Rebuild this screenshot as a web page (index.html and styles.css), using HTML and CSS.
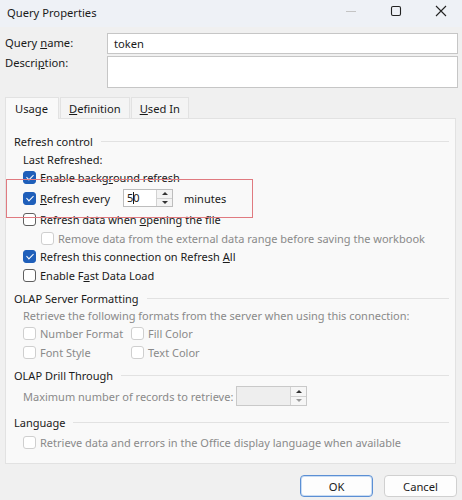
FILE: index.html
```html
<!DOCTYPE html>
<html>
<head>
<meta charset="utf-8">
<title>Query Properties</title>
<link rel="stylesheet" href="styles.css">
</head>
<body>
<div class="dialog">
  <div class="titlebar">
    <span class="title">Query Properties</span>
    <div class="caption-buttons">
      <span class="cap cap-min"><svg width="12" height="12" viewBox="0 0 12 12"><path d="M1 6.5h10" stroke="#c4c4c4" stroke-width="1"/></svg></span>
      <span class="cap cap-max"><svg width="12" height="12" viewBox="0 0 12 12"><rect x="1.5" y="1.5" width="9" height="9" rx="1.5" fill="none" stroke="#222" stroke-width="1.1"/></svg></span>
      <span class="cap cap-close"><svg width="12" height="12" viewBox="0 0 12 12"><path d="M1 1l10 10M11 1L1 11" stroke="#222" stroke-width="1.1"/></svg></span>
    </div>
  </div>

  <div class="content">
    <div class="field">
      <label class="field-label">Query <u>n</u>ame:</label>
      <div class="textbox name-box">token</div>
    </div>
    <div class="field">
      <label class="field-label desc-label">Descri<u>p</u>tion:</label>
      <div class="textbox desc-box"></div>
    </div>

    <div class="tabs">
      <div class="tab active">Usa<u>g</u>e</div>
      <div class="tab"><u>D</u>efinition</div>
      <div class="tab"><u>U</u>sed In</div>
    </div>

    <div class="panel">
      <div class="group-title">Refresh control</div>
      <div class="row plain">Last Refreshed:</div>
      <div class="row"><span class="check on"></span><span>Enable backg<u>r</u>ound refresh</span></div>
      <div class="row tall">
        <span class="check on"></span><span class="every-label"><u>R</u>efresh every</span>
        <div class="spin small-spin">
          <span class="spin-text">5<span class="caret"></span>0</span>
          <span class="spin-btns"><span class="arr up"></span><span class="arr down"></span></span>
        </div>
        <span class="unit">minutes</span>
      </div>
      <div class="row r19"><span class="check"></span><span>Refresh data when <u>o</u>pening the file</span></div>
      <div class="row sub dim"><span class="check off"></span><span>Remove data from the external data range before saving the workbook</span></div>
      <div class="row r19"><span class="check on"></span><span>Refresh this connection on Refresh <u>A</u>ll</span></div>
      <div class="row"><span class="check"></span><span>Enable F<u>a</u>st Data Load</span></div>

      <div class="group-title gap">OLAP Server Formatting</div>
      <div class="row plain dim r17">Retrieve the following formats from the server when using this connection:</div>
      <div class="row dim pair r19">
        <span class="cell"><span class="check off"></span><span>Number Format</span></span>
        <span class="cell"><span class="check off"></span><span>Fill Color</span></span>
      </div>
      <div class="row dim pair">
        <span class="cell"><span class="check off"></span><span>Font Style</span></span>
        <span class="cell"><span class="check off"></span><span>Text Color</span></span>
      </div>

      <div class="group-title gap">OLAP Drill Through</div>
      <div class="row plain dim tall">
        <span class="max-label">Maximum number of records to retrieve:</span>
        <div class="spin big-spin disabled">
          <span class="spin-text"></span>
          <span class="spin-btns"><span class="arr up"></span><span class="arr down"></span></span>
        </div>
      </div>

      <div class="group-title gap">Language</div>
      <div class="row dim lang"><span class="check off"></span><span>Retrieve data and errors in the Office display language when available</span></div>
    </div>

    <div class="buttons">
      <button class="btn default">OK</button>
      <button class="btn">Cancel</button>
    </div>
  </div>

  <div class="highlight"></div>
</div>
</body>
</html>
```

FILE: styles.css
```css
html, body {
  margin: 0;
  padding: 0;
}

body {
  width: 462px;
  height: 500px;
  overflow: hidden;
  background: #f0f0f0;
  font-family: "Noto Sans", "Open Sans", sans-serif;
  font-size: 11px;
  color: #1a1a1a;
}

.dialog {
  position: relative;
  width: 462px;
  height: 500px;
}

/* window caption */
.titlebar {
  height: 27px;
  background: #eef1f6;
  display: flex;
  align-items: center;
  justify-content: space-between;
  padding-left: 7px;
}

.title {
  font-size: 11.2px;
  color: #1a1a1a;
  margin-top: -3px;
}

.caption-buttons {
  display: flex;
  align-items: center;
  margin-top: -5px;
}

.cap {
  display: flex;
  width: 12px;
  height: 12px;
}

.cap-min { margin-right: 33px; }
.cap-max { margin-right: 33px; }
.cap-close { margin-right: 15px; }

/* dialog body */
.content {
  padding: 6px 4px 0 5px;
}

.field {
  display: flex;
  align-items: flex-start;
  margin-bottom: 2px;
}

.field-label {
  width: 102px;
  padding-top: 1px;
  line-height: 17px;
  font-size: 11.2px;
}

.field-label.desc-label {
  padding-top: 0;
  line-height: 14px;
}

.textbox {
  flex: 1;
  background: #fff;
  border: 1px solid #c6c6c6;
  box-sizing: border-box;
  padding: 1px 6px;
  line-height: 17px;
  font-size: 11.2px;
}

.name-box { height: 21px; }
.desc-box { height: 32px; }

/* tab strip */
.tabs {
  display: flex;
  margin-top: 9px;
  height: 22px;
  width: 447px;
}

.tab {
  height: 21px;
  line-height: 21px;
  padding: 0 8px;
  box-sizing: border-box;
  border: 1px solid #e2e2e2;
  border-bottom: none;
  background: #f4f4f4;
  margin-right: 1px;
  font-size: 11.2px;
}

.tab.active {
  background: #f9f9f9;
  height: 22px;
  position: relative;
  z-index: 1;
  padding: 0 10px 0 9px;
}

.panel {
  width: 451px;
  height: 346px;
  box-sizing: border-box;
  background: #f9f9f9;
  border: 1px solid #e2e2e2;
  margin-top: -1px;
  padding: 13px 6px 0 8px;
}

.group-title {
  display: flex;
  align-items: center;
  height: 18px;
  white-space: nowrap;
}

.group-title::after {
  content: "";
  flex: 1;
  height: 1px;
  background: #e2e2e2;
  margin-left: 8px;
}

.group-title.gap { margin-top: 5px; }

.row {
  display: flex;
  align-items: center;
  height: 18px;
  padding-left: 9px;
  white-space: nowrap;
}

.row.r19 { height: 19px; }
.row.r17 { height: 17px; }
.row.tall { height: 24px; }
.row.sub { padding-left: 27px; }
.row.lang { margin-top: 2px; }

.dim { color: #8a8a8a; }

/* checkboxes */
.check {
  flex: none;
  width: 13px;
  height: 13px;
  box-sizing: border-box;
  border: 1px solid #5f5f5f;
  border-radius: 3px;
  background: #fff;
  margin-right: 4px;
  position: relative;
}

.check.on {
  background: #1f5fba;
  border-color: #1f5fba;
}

.check.on::after {
  content: "";
  position: absolute;
  left: 3.5px;
  top: 1px;
  width: 3px;
  height: 6px;
  border: solid #fff;
  border-width: 0 1.5px 1.5px 0;
  transform: rotate(45deg);
}

.check.off {
  border-color: #cfcfcf;
}

.pair .cell {
  display: flex;
  align-items: center;
}

.pair .cell:first-child { width: 108px; }

/* spin boxes */
.every-label { width: 83px; }

.spin {
  display: flex;
  box-sizing: border-box;
  border: 1px solid #bdbdbd;
  background: #fff;
}

.small-spin {
  width: 50px;
  height: 18px;
}

.big-spin {
  width: 71px;
  height: 20px;
  margin-left: 3px;
}

.spin-text {
  flex: 1;
  padding-left: 3px;
  line-height: 16px;
  color: #1a1a1a;
}

.caret {
  display: inline-block;
  width: 1px;
  height: 12px;
  background: #1a1a1a;
  vertical-align: -2px;
  margin: 0 -1px 0 0;
}

.spin-btns {
  width: 15px;
  display: flex;
  flex-direction: column;
  border-left: 1px solid #d2d2d2;
  background: #f3f3f3;
}

.arr {
  flex: 1;
  display: flex;
  align-items: center;
  justify-content: center;
}

.arr.up { border-bottom: 1px solid #d2d2d2; }

.arr.up::before {
  content: "";
  border: 3px solid transparent;
  border-bottom: 3px solid #333;
  border-top: none;
}

.arr.down::before {
  content: "";
  border: 3px solid transparent;
  border-top: 3px solid #333;
  border-bottom: none;
}

.disabled { background: #eeeeee; border-color: #c9c9c9; }
.disabled .spin-btns { background: #f6f6f6; }
.disabled .arr.down::before { border-top-color: #999; }

.unit { margin-left: 11px; }

/* footer buttons */
.buttons {
  display: flex;
  justify-content: flex-end;
  gap: 11px;
  margin-top: 11px;
  padding-right: 1px;
}

.btn {
  width: 73px;
  height: 22px;
  font-family: inherit;
  font-size: 11.2px;
  color: #1a1a1a;
  background: #fdfdfd;
  border: 1px solid #d0d0d0;
  border-radius: 4px;
  padding: 0;
}

.btn.default {
  border: 1px solid #5b8fd4;
  box-shadow: inset 0 0 0 1px #c9dcf3;
}

/* red annotation frame drawn over the refresh options */
.highlight {
  position: absolute;
  left: 6px;
  top: 179px;
  width: 247px;
  height: 39px;
  box-sizing: border-box;
  border: 1.5px solid #e07a80;
  pointer-events: none;
}
```
